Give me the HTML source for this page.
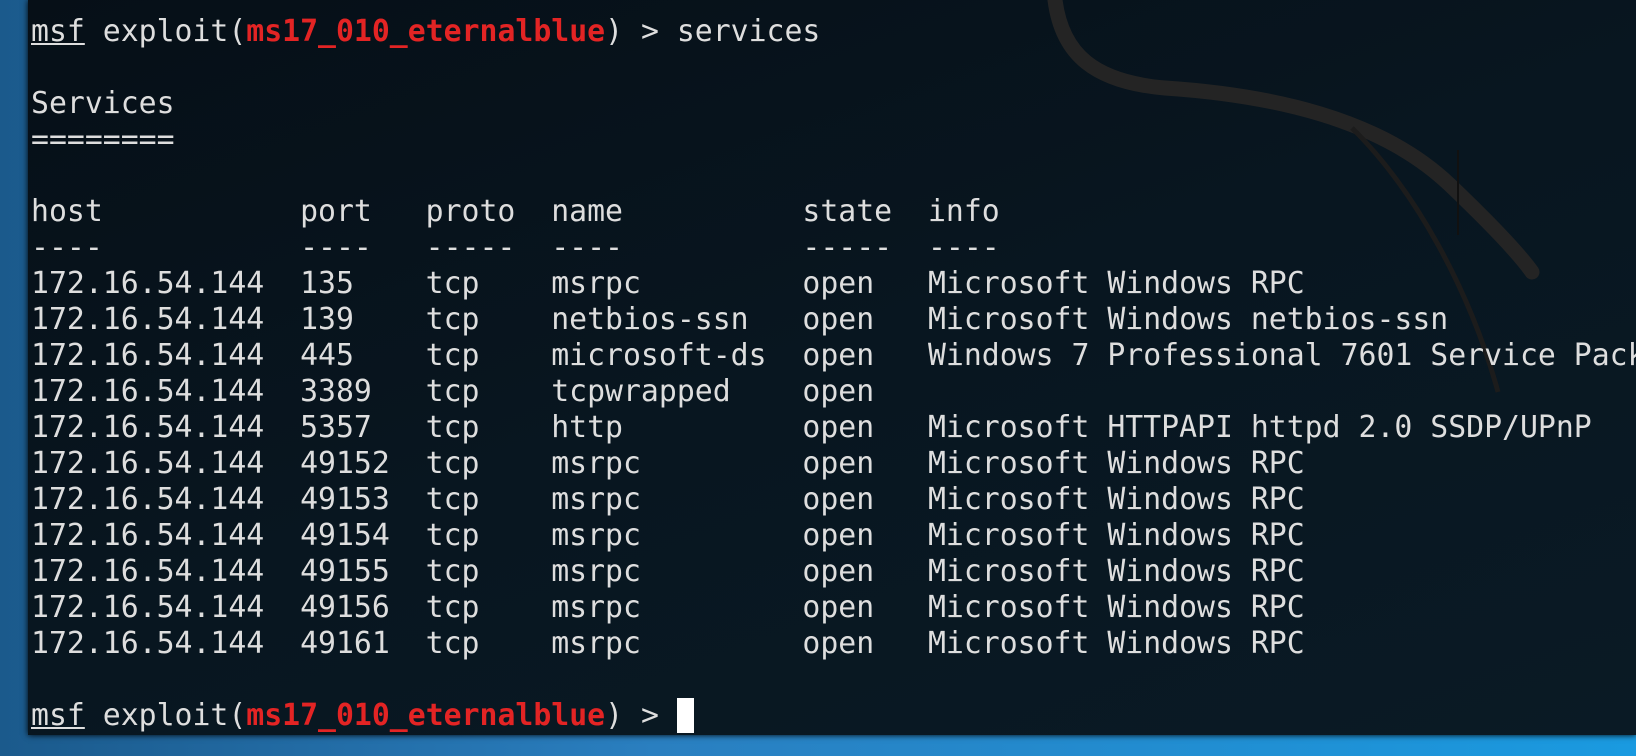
<!DOCTYPE html>
<html><head><meta charset="utf-8"><style>
html,body{margin:0;padding:0;width:1636px;height:756px;overflow:hidden;background:#1d6fb0;}
#desk{position:absolute;left:0;top:0;width:1636px;height:756px;background:linear-gradient(90deg,#1b5a8c,#2a7fc0 40%,#1a9ae0);}
#term{position:absolute;left:28px;top:0;width:1608px;height:735px;background:linear-gradient(160deg,#060f17 0%,#081620 50%,#0a1a25 100%);box-shadow:0 0 6px #000;}
svg{position:absolute;left:0;top:0}
pre{position:absolute;left:31px;top:14px;margin:0;font-family:"DejaVu Sans Mono","Liberation Mono",monospace;font-size:29.8px;line-height:36px;color:#dedede;white-space:pre;}
.r{color:#e32424;font-weight:bold}
u{text-decoration:underline}
.c{display:inline-block;width:17px;height:35px;background:#fff;vertical-align:-8px}
</style></head><body>
<div id="desk"></div>
<div id="term"></div>
<svg width="1636" height="756">
<path d="M1055 0 C1062 55 1095 82 1165 88 C1270 95 1380 118 1450 185 C1495 228 1520 255 1532 272" stroke="#242424" stroke-width="15" fill="none" stroke-linecap="round"/>
<path d="M1352 128 C1415 190 1470 290 1498 392" stroke="#1c1c1c" stroke-width="5" fill="none"/>
<path d="M1458 150 L1458 235" stroke="#111" stroke-width="2"/>
</svg>
<pre><u>msf</u> exploit(<span class="r">ms17_010_eternalblue</span>) &gt; services

Services
========

host           port   proto  name          state  info
----           ----   -----  ----          -----  ----
172.16.54.144  135    tcp    msrpc         open   Microsoft Windows RPC
172.16.54.144  139    tcp    netbios-ssn   open   Microsoft Windows netbios-ssn
172.16.54.144  445    tcp    microsoft-ds  open   Windows 7 Professional 7601 Service Pack 1
172.16.54.144  3389   tcp    tcpwrapped    open
172.16.54.144  5357   tcp    http          open   Microsoft HTTPAPI httpd 2.0 SSDP/UPnP
172.16.54.144  49152  tcp    msrpc         open   Microsoft Windows RPC
172.16.54.144  49153  tcp    msrpc         open   Microsoft Windows RPC
172.16.54.144  49154  tcp    msrpc         open   Microsoft Windows RPC
172.16.54.144  49155  tcp    msrpc         open   Microsoft Windows RPC
172.16.54.144  49156  tcp    msrpc         open   Microsoft Windows RPC
172.16.54.144  49161  tcp    msrpc         open   Microsoft Windows RPC

<u>msf</u> exploit(<span class="r">ms17_010_eternalblue</span>) &gt; <span class="c"></span></pre>
</body></html>
